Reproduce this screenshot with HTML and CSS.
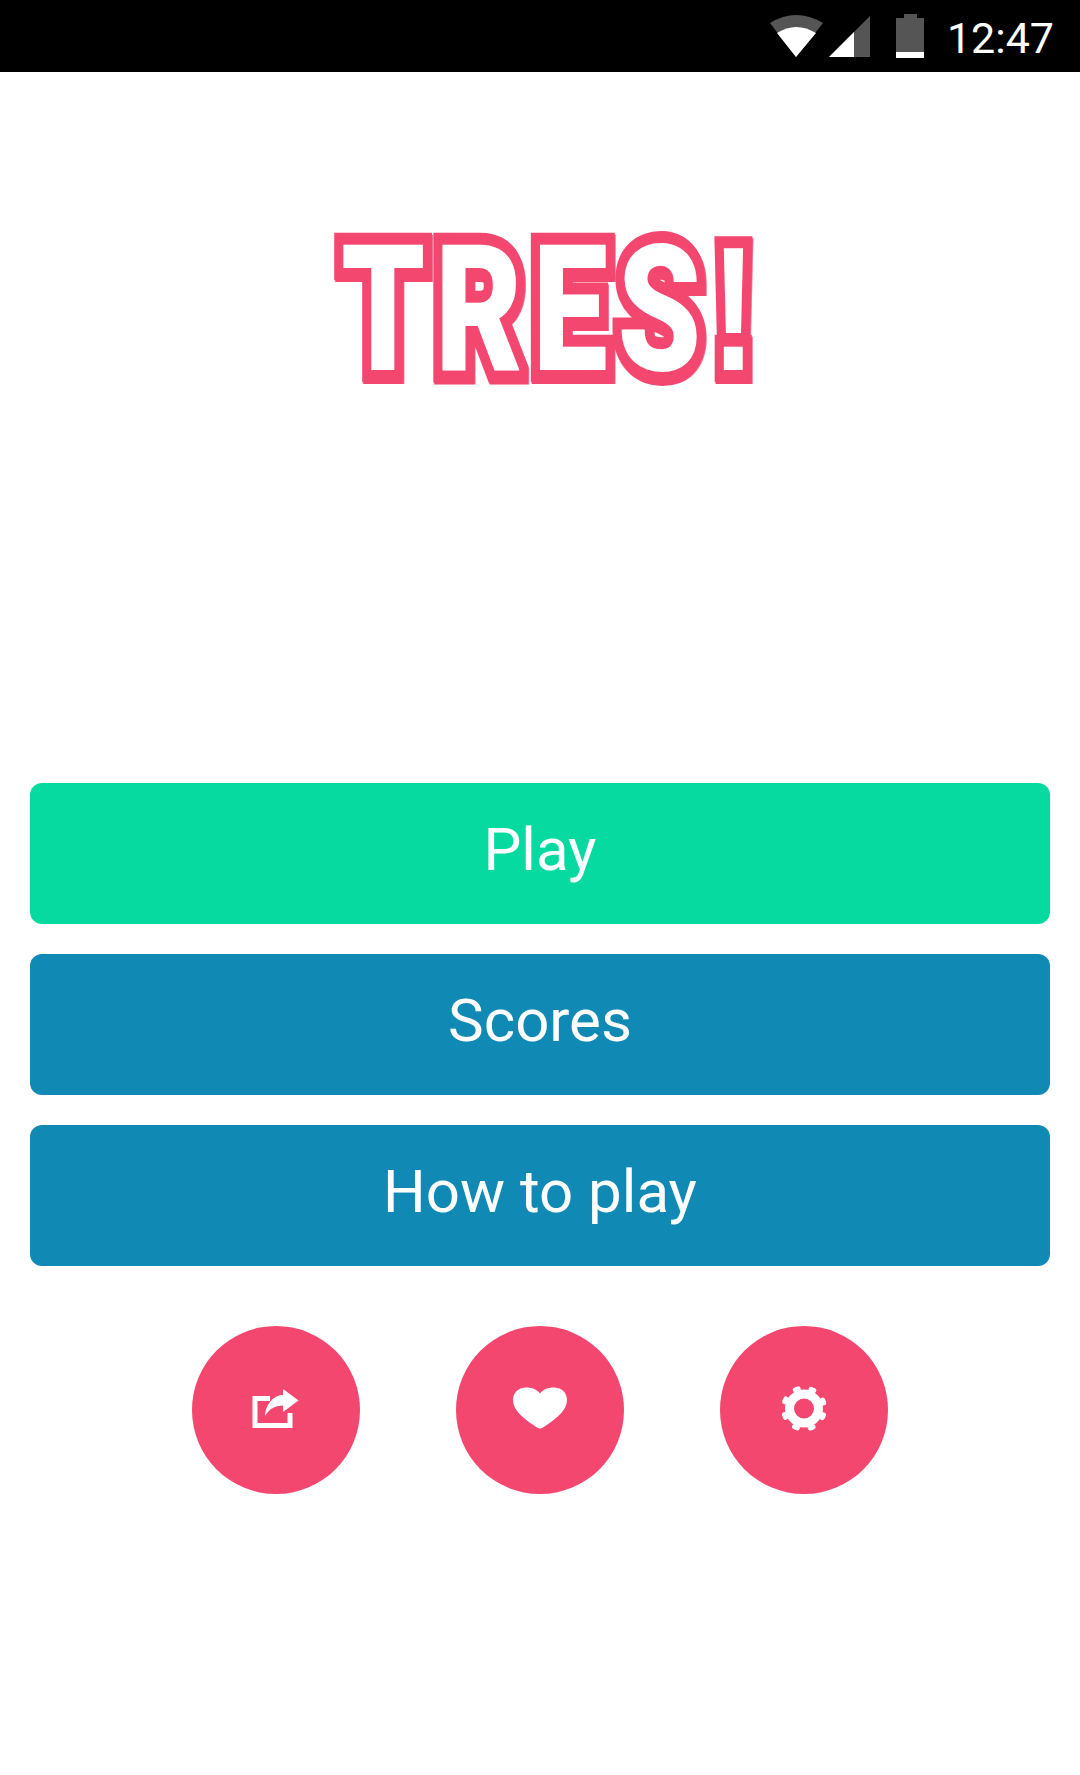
FILE: index.html
```html
<!DOCTYPE html>
<html lang="en">
<head>
  <meta charset="UTF-8">
  <meta name="viewport" content="width=device-width, initial-scale=1.0">
  <title>Tres!</title>
  <link rel="stylesheet" href="styles.css">
</head>
<body>
  <!-- Android status bar -->
  <div class="status-bar">
    <svg class="status-icons" width="160" height="72" viewBox="0 0 160 72">
      <path class="dim" d="M0 23 Q26 7 53 23 L26 57 Z"/>
      <path class="lit" d="M7 33 Q26 21 46 33 L26 57 Z"/>
      <path class="dim" d="M59 57 L100 16 V57 Z"/>
      <path class="lit" d="M59 57 L84 32 V57 Z"/>
      <path class="dim" d="M134 14 H147 V18 H154 V52 H126 V18 H134 Z"/>
      <rect class="lit" x="126" y="52" width="28" height="6"/>
    </svg>
    <span class="clock">12:47</span>
  </div>

  <header class="logo">
    <svg width="500" height="200" viewBox="-30 -10 500 200">
      <g transform="scale(0.76 1)">
        <text class="logo-text" x="27.6" y="155">TRES<tspan class="logo-bang">!</tspan></text>
      </g>
    </svg>
  </header>

  <nav class="menu">
    <button class="menu-btn play">Play</button>
    <button class="menu-btn">Scores</button>
    <button class="menu-btn">How to play</button>
  </nav>

  <div class="round-row">
    <button class="round-btn" aria-label="Share">
      <svg width="60" height="60" viewBox="0 0 60 60">
        <path class="icon-line" d="M24 18.5 H9 V45.5 H44 V33"/>
        <path class="icon-fill" d="M37 9 L52.5 20.5 L37 32 V25.5 C29 25.5 23 29 19 36 C19.5 25 27 15 37 15 Z"/>
      </svg>
    </button>
    <button class="round-btn" aria-label="Favourite">
      <svg width="60" height="60" viewBox="0 0 60 60">
        <path class="icon-fill" d="M30 48.5 C28 48.5 26 47 24 45.5 C13 38 3 30 3 20 C3 12 9 7.5 16.5 7.5 C22 7.5 27 9.5 30 13.5 C33 9.5 38 7.5 43.5 7.5 C51 7.5 57 12 57 20 C57 30 47 38 36 45.5 C34 47 32 48.5 30 48.5 Z"/>
      </svg>
    </button>
    <button class="round-btn" aria-label="Settings">
      <svg width="60" height="60" viewBox="0 0 60 60">
        <circle class="gear-ring" cx="30" cy="28.5" r="14.5"/>
        <circle class="gear-teeth" cx="30" cy="28.5" r="20.5"/>
      </svg>
    </button>
  </div>
</body>
</html>
```

FILE: styles.css
```css
body {
  margin: 0;
  background-color: #ffffff;
  font-family: Roboto, Arial, sans-serif;
}
.status-bar {
  display: flex;
  justify-content: flex-end;
  align-items: center;
  height: 72px;
  padding-right: 26px;
  background-color: #000000;
}
.status-icons {
  display: block;
  margin-right: 17px;
}
.dim {
  fill: #555555;
}
.lit {
  fill: #ffffff;
}
.clock {
  padding-top: 4px;
  color: #ffffff;
  font-size: 43px;
  line-height: 68px;
}
.logo {
  display: flex;
  justify-content: center;
  margin-top: 133px;
  height: 200px;
}
.logo svg {
  display: block;
}
.logo-text {
  font-family: Roboto, Arial, sans-serif;
  font-size: 176px;
  font-weight: 900;
  letter-spacing: 13.2px;
  fill: #ffffff;
  stroke: #f34770;
  stroke-width: 24px;
  stroke-linejoin: miter;
  paint-order: stroke;
  filter: drop-shadow(1px 2px 0 #f34770);
}
.logo-bang {
  font-family: "Liberation Sans", Arial, sans-serif;
  font-weight: 700;
}
.menu {
  display: flex;
  flex-direction: column;
  gap: 30px;
  margin: 378px 30px 0;
}
.menu-btn {
  height: 141px;
  padding: 0 0 8px;
  border: none;
  border-radius: 12px;
  background-color: #108ab4;
  color: #ffffff;
  font-family: Roboto, Arial, sans-serif;
  font-size: 60px;
}
.menu-btn.play {
  background-color: #07daa0;
}
.round-row {
  display: flex;
  justify-content: center;
  gap: 96px;
  margin-top: 60px;
}
.round-btn {
  display: flex;
  justify-content: center;
  align-items: center;
  width: 168px;
  height: 168px;
  padding: 0;
  border: none;
  border-radius: 50%;
  background-color: #f34770;
}
.icon-fill {
  fill: #ffffff;
}
.icon-line {
  fill: none;
  stroke: #ffffff;
  stroke-width: 5px;
}
.gear-ring {
  fill: none;
  stroke: #ffffff;
  stroke-width: 9px;
}
.gear-teeth {
  fill: none;
  stroke: #ffffff;
  stroke-width: 5px;
  stroke-linecap: round;
  stroke-dasharray: 3 13.1;
  stroke-dashoffset: -6.55;
}
```
